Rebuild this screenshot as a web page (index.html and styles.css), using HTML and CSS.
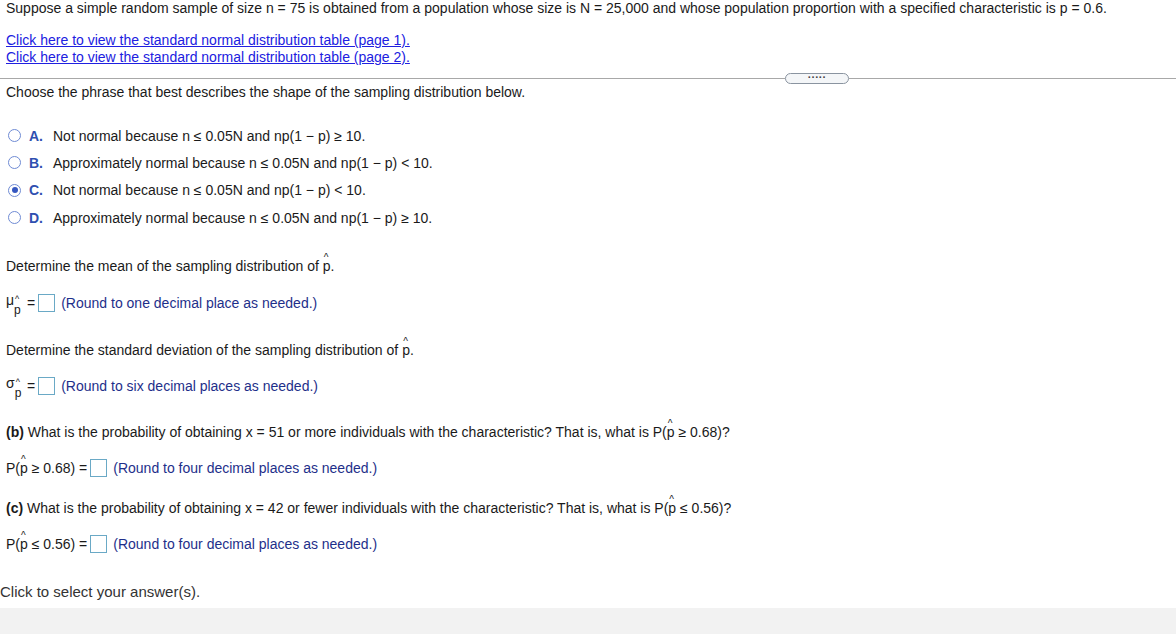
FILE: index.html
```html
<!DOCTYPE html>
<html>
<head>
<meta charset="utf-8">
<link rel="stylesheet" href="styles.css">
</head>
<body>
<div class="page">
  <p class="txt intro">Suppose a simple random sample of size n = 75 is obtained from a population whose size is N = 25,000 and whose population proportion with a specified characteristic is p = 0.6.</p>
  <div class="links">
    <a class="link" href="#">Click here to view the standard normal distribution table (page 1).</a>
    <a class="link" href="#">Click here to view the standard normal distribution table (page 2).</a>
  </div>
  <div class="divider">
    <div class="rule rule-left"></div>
    <div class="pill">&middot;&middot;&middot;&middot;&middot;</div>
    <div class="rule rule-right"></div>
  </div>
  <p class="txt choose">Choose the phrase that best describes the shape of the sampling distribution below.</p>
  <div class="options">
    <div class="opt"><span class="radio"></span><span class="letter">A.</span><span class="otext">Not normal because n ≤ 0.05N and np(1 − p) ≥ 10.</span></div>
    <div class="opt"><span class="radio"></span><span class="letter">B.</span><span class="otext">Approximately normal because n ≤ 0.05N and np(1 − p) &lt; 10.</span></div>
    <div class="opt"><span class="radio checked"></span><span class="letter">C.</span><span class="otext">Not normal because n ≤ 0.05N and np(1 − p) &lt; 10.</span></div>
    <div class="opt"><span class="radio"></span><span class="letter">D.</span><span class="otext">Approximately normal because n ≤ 0.05N and np(1 − p) ≥ 10.</span></div>
  </div>
  <p class="txt det-mean">Determine the mean of the sampling distribution of <span class="hat">p</span>.</p>
  <div class="ans ans-mu"><span class="sym"><span class="greek">μ</span><span class="subp">p</span></span><span class="eq">=</span><span class="box"></span><span class="hint">(Round to one decimal place as needed.)</span></div>
  <p class="txt det-sd">Determine the standard deviation of the sampling distribution of <span class="hat">p</span>.</p>
  <div class="ans ans-sd"><span class="sym"><span class="greek">σ</span><span class="subp">p</span></span><span class="eq">=</span><span class="box"></span><span class="hint">(Round to six decimal places as needed.)</span></div>
  <p class="txt q-b"><b>(b)</b> What is the probability of obtaining x = 51 or more individuals with the characteristic? That is, what is P(<span class="hat">p</span> ≥ 0.68)?</p>
  <div class="ans ans-b"><span class="plabel">P(<span class="hat">p</span> ≥ 0.68) =</span><span class="box"></span><span class="hint">(Round to four decimal places as needed.)</span></div>
  <p class="txt q-c"><b>(c)</b> What is the probability of obtaining x = 42 or fewer individuals with the characteristic? That is, what is P(<span class="hat">p</span> ≤ 0.56)?</p>
  <div class="ans ans-c"><span class="plabel">P(<span class="hat">p</span> ≤ 0.56) =</span><span class="box"></span><span class="hint">(Round to four decimal places as needed.)</span></div>
</div>
<p class="click">Click to select your answer(s).</p>
<div class="band"></div>
</body>
</html>
```

FILE: styles.css
```css
html, body {
  margin: 0;
  padding: 0;
  background: #ffffff;
}
body {
  font-family: "Liberation Sans", Arial, sans-serif;
  font-size: 14px;
  color: #1a1a1a;
  width: 1176px;
  height: 634px;
  overflow: hidden;
}
.page {
  padding-left: 6px;
}
.txt {
  margin: 0;
  line-height: 16px;
  white-space: nowrap;
}
.intro {
  margin-top: 0;
}
.links {
  margin-top: 16px;
  display: flex;
  flex-direction: column;
}
.link {
  color: #2020e0;
  text-decoration: underline;
  line-height: 17px;
  align-self: flex-start;
}
.divider {
  margin-top: 6px;
  margin-left: -6px;
  display: flex;
  align-items: center;
  height: 12px;
}
.rule {
  height: 1px;
  background: #a8a8a8;
}
.rule-left {
  width: 785px;
}
.rule-right {
  flex: 1;
}
.pill {
  width: 62px;
  height: 9px;
  border: 1px solid #8a94a0;
  border-radius: 6px;
  background: #f4f6f8;
  font-size: 11px;
  font-weight: bold;
  line-height: 6px;
  text-align: center;
  color: #444;
}
.choose {
  margin-top: 0;
}
.options {
  margin-top: 22px;
}
.opt {
  height: 27.3px;
  display: flex;
  align-items: center;
}
.radio {
  width: 13px;
  height: 13px;
  border: 1.6px solid #6f8bd4;
  border-radius: 50%;
  box-sizing: border-box;
  margin-left: 2px;
  display: flex;
  align-items: center;
  justify-content: center;
}
.radio.checked::after {
  content: "";
  width: 6px;
  height: 6px;
  border-radius: 50%;
  background: #3557c0;
}
.letter {
  color: #2f4fb0;
  font-weight: bold;
  margin-left: 8px;
  width: 24px;
}
.otext {
  white-space: nowrap;
}
.det-mean {
  margin-top: 27px;
}
.hat {
  position: relative;
  display: inline-block;
}
.hat::before {
  content: "^";
  position: absolute;
  left: 1px;
  top: -5px;
  font-size: 10px;
  line-height: 10px;
}
.ans {
  display: flex;
  align-items: center;
  height: 20px;
  white-space: nowrap;
}
.ans-mu {
  margin-top: 19px;
}
.det-sd {
  margin-top: 29px;
}
.ans-sd {
  margin-top: 18px;
}
.sym {
  display: inline-flex;
  align-items: flex-start;
  width: 21px;
  height: 20px;
}
.greek {
  font-size: 14px;
  line-height: 15px;
}
.subp {
  position: relative;
  font-size: 12px;
  line-height: 12px;
  margin-top: 11px;
}
.subp::before {
  content: "^";
  position: absolute;
  left: 1px;
  top: -9px;
  font-size: 9px;
  line-height: 9px;
}
.eq {
  margin-right: 3px;
}
.box {
  width: 15px;
  height: 16px;
  border: 1px solid #6aa9c6;
  background: #ffffff;
  margin-right: 6px;
}
.hint {
  color: #1e2f8a;
}
.q-b {
  margin-top: 28px;
}
.ans-b {
  margin-top: 18px;
}
.q-c {
  margin-top: 22px;
}
.ans-c {
  margin-top: 18px;
}
.plabel {
  margin-right: 3px;
}
.click {
  margin: 30px 0 0 0;
  font-size: 15px;
  line-height: 16px;
  color: #333333;
}
.band {
  margin-top: 8px;
  height: 30px;
  background: #f2f2f2;
}
```
